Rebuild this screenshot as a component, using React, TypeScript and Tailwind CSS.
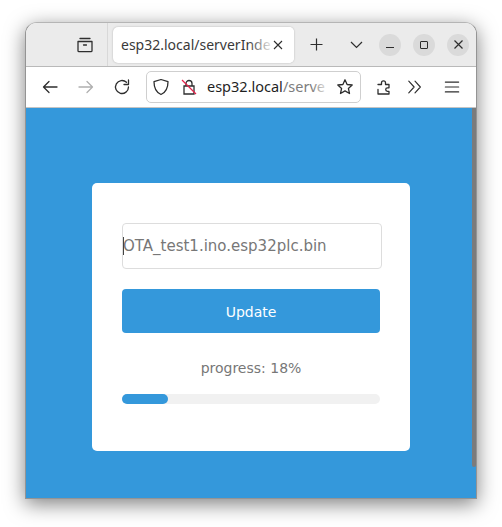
import React from 'react';

const Icon: React.FC<{ size?: number; className?: string; children: React.ReactNode }> = ({ size = 18, className, children }) => (
  <svg width={size} height={size} viewBox="0 0 18 18" fill="none" stroke="currentColor" strokeWidth="1.3" strokeLinecap="round" strokeLinejoin="round" className={`shrink-0 ${className ?? ''}`}>
    {children}
  </svg>
);

export default function App() {
  return (
    <div className="w-[502px] h-[527px] bg-white pt-[22px] pl-[25px] font-['Noto_Sans',sans-serif]">
      <div className="w-[452px] h-[477px] flex flex-col rounded-t-[12px] overflow-hidden border border-[#949494] border-t-[#b5b5b5] shadow-[0_5px_20px_rgba(0,0,0,0.5)] bg-white">
        {/* tab bar */}
        <div className="h-[44px] shrink-0 flex items-center bg-[#ebebeb] border-b border-[#b9b9b9] text-[#2e2e2e]">
          <div className="w-[82px] h-full flex items-center justify-end pr-[13px] border-r border-[#d8d8d8]">
            <Icon size={18}>
              <path d="M4 2.500h10M2 5.500h14v9.200a1 1 0 0 1-1 1H3a1 1 0 0 1-1-1zM7.500 9h3" />
            </Icon>
          </div>
          <div className="ml-[5px] w-[181px] h-[36px] bg-white rounded-[5px] shadow-[0_0_2px_rgba(0,0,0,0.25)] flex items-center pl-[8px] text-[14px] relative">
            <span className="whitespace-nowrap text-[#3a3a3a]">esp32.local/serverInde</span>
            <div className="absolute right-[20px] top-0 bottom-0 w-[26px] bg-gradient-to-r from-transparent to-white" />
            <div className="absolute right-0 top-0 bottom-0 w-[21px] bg-white rounded-r-[5px] flex items-center">
              <svg width="10" height="10" viewBox="0 0 10 10" stroke="currentColor" strokeWidth="1.1"><path d="M1 1l8 8M9 1l-8 8" /></svg>
            </div>
          </div>
          <div className="ml-[15px] w-[14px] flex justify-center">
            <svg width="13" height="13" viewBox="0 0 13 13" stroke="currentColor" strokeWidth="1.2"><path d="M6.500 0.500v12M0.500 6.500h12" /></svg>
          </div>
          <div className="ml-[27px]">
            <svg width="13" height="8" viewBox="0 0 13 8" fill="none" stroke="currentColor" strokeWidth="1.200" className="block"><path d="M1 1l5.500 5.500L12 1" /></svg>
          </div>
          <div className="ml-[16px] flex gap-[12px]">
            <div className="w-[22px] h-[22px] rounded-full bg-[#dadada] flex items-center justify-center">
              <div className="w-[8px] h-px bg-[#2e2e2e] mt-[6px]" />
            </div>
            <div className="w-[22px] h-[22px] rounded-full bg-[#dadada] flex items-center justify-center">
              <div className="w-[8px] h-[8px] border border-[#2e2e2e] rounded-[1px]" />
            </div>
            <div className="w-[22px] h-[22px] rounded-full bg-[#dadada] flex items-center justify-center">
              <svg width="9" height="9" viewBox="0 0 9 9" stroke="currentColor" strokeWidth="1.2"><path d="M0.500 0.500l8 8M8.500 0.500l-8 8" /></svg>
            </div>
          </div>
        </div>
        {/* toolbar */}
        <div className="h-[41px] shrink-0 flex items-center bg-white border-b border-[#c4c4c4] text-[#2e2e2e]">
          <Icon size={18} className="ml-[15px]"><path d="M16 9H2.500M8 3.500 2.500 9 8 14.500" /></Icon>
          <Icon size={18} className="ml-[18px] text-[#b0b0b0]"><path d="M2 9h13.500M10 3.500 15.500 9 10 14.500" /></Icon>
          <Icon size={18} className="ml-[18px]"><path d="M15.500 9A6.500 6.500 0 1 1 13.500 4.300M15.500 2v4.500H11" /></Icon>
          <div className="ml-[15px] w-[215px] h-[32px] border border-[#cfcfcf] rounded-[5px] flex items-center pl-[5px] pr-[6px] relative">
            <Icon size={18}><path d="M9 1.500 16 3.700c0 6-1.400 10.300-7 12.800C3.400 14 2 9.700 2 3.700z" /></Icon>
            <svg width="16" height="18" viewBox="0 0 16 18" fill="none" className="ml-[11px] shrink-0">
              <path d="M5 8V5.500a3 3 0 0 1 6 0V8M3 8h10v8H3z" stroke="#2e2e2e" strokeWidth="1.300" />
              <path d="M1 2l14 14" stroke="#e5234b" strokeWidth="1.300" />
            </svg>
            <span className="ml-[10px] text-[14.5px] whitespace-nowrap">
              <span className="text-[#1f1f1f]">esp32.local</span>
              <span className="text-[#7d7d7d]">/serve</span>
            </span>
            <div className="absolute right-[30px] top-0 bottom-0 w-[18px] bg-gradient-to-r from-transparent to-white" />
            <Icon size={18} className="ml-auto"><path d="M9 1.800 11.100 6.500 16.200 7 12.400 10.400 13.500 15.500 9 12.900 4.500 15.500 5.600 10.400 1.800 7 6.900 6.500z" /></Icon>
          </div>
          <Icon size={18} className="ml-[14px]"><path d="M3 6.500h3.500V4.800a2 2 0 0 1 4 0v1.700H14v3.300h-1.500a1.800 1.800 0 0 0 0 3.600H14V16H3v-4.500" /></Icon>
          <Icon size={16} className="ml-[14px]"><path d="M2 2.500 8 9l-6 6.500M9 2.500 15 9l-6 6.500" /></Icon>
          <Icon size={16} className="ml-[21px]"><path d="M1.500 3.500h15M1.500 9h15M1.500 14.500h15" /></Icon>
        </div>
        {/* page */}
        <div className="flex-1 bg-[#3498db] relative pl-[66px] pt-[75px] font-['DejaVu_Sans',sans-serif]">
          <div className="absolute right-0 top-0 w-[4px] h-[359px] bg-[#7b7b7b] rounded-b-[2px]" />
          <div className="w-[318px] h-[268px] bg-white rounded-[5px] pt-[40px] pl-[30px]">
            <div className="w-[260px] h-[46px] border border-[#dddddd] rounded-[4px] flex items-center text-[15px] text-[#777777] whitespace-nowrap relative">
              <span className="absolute left-0 w-px h-[18px] bg-[#444444]" />
              <span>OTA_test1.ino.esp32plc.bin</span>
            </div>
            <div className="mt-[20px] w-[258px] h-[44px] bg-[#3498db] rounded-[4px] flex items-center justify-center text-white text-[14px] pt-[2px]">
              Update
            </div>
            <div className="mt-[25px] w-[258px] text-center text-[14px] leading-[20px] text-[#777777]">progress: 18%</div>
            <div className="mt-[16px] w-[258px] h-[10px] bg-[#f1f1f1] rounded-[5px]">
              <div className="h-full bg-[#3498db] rounded-[5px]" style={{ width: '18%' }} />
            </div>
          </div>
        </div>
      </div>
    </div>
  );
}
